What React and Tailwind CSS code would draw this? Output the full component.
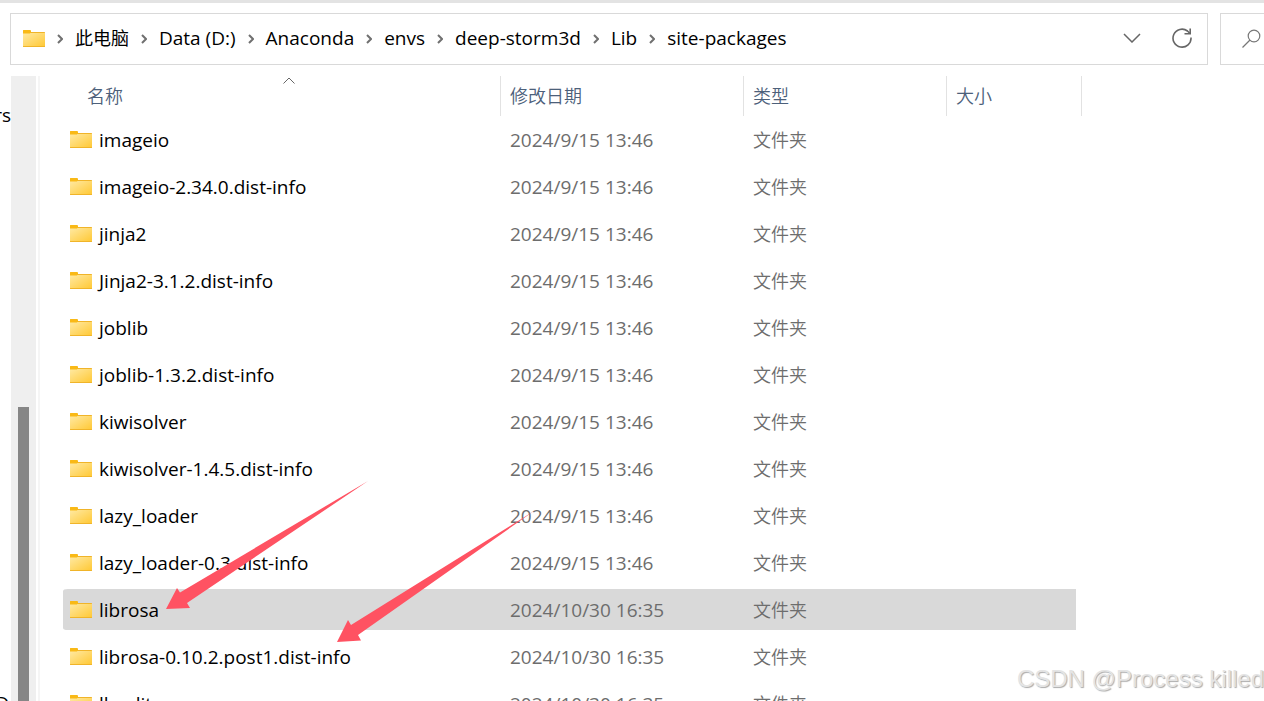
import React, { useState } from 'react';

const PATH = ['此电脑', 'Data (D:)', 'Anaconda', 'envs', 'deep-storm3d', 'Lib', 'site-packages'];

const COLUMNS = [
  { label: '名称', width: 'w-[438px]', pad: 'pl-6' },
  { label: '修改日期', width: 'w-[243px]', pad: 'pl-[9px]' },
  { label: '类型', width: 'w-[203px]', pad: 'pl-[9px]' },
  { label: '大小', width: 'w-[135px]', pad: 'pl-[9px]' },
];

const FOLDERS = [
  { name: 'imageio', date: '2024/9/15 13:46' },
  { name: 'imageio-2.34.0.dist-info', date: '2024/9/15 13:46' },
  { name: 'jinja2', date: '2024/9/15 13:46' },
  { name: 'Jinja2-3.1.2.dist-info', date: '2024/9/15 13:46' },
  { name: 'joblib', date: '2024/9/15 13:46' },
  { name: 'joblib-1.3.2.dist-info', date: '2024/9/15 13:46' },
  { name: 'kiwisolver', date: '2024/9/15 13:46' },
  { name: 'kiwisolver-1.4.5.dist-info', date: '2024/9/15 13:46' },
  { name: 'lazy_loader', date: '2024/9/15 13:46' },
  { name: 'lazy_loader-0.3.dist-info', date: '2024/9/15 13:46' },
  { name: 'librosa', date: '2024/10/30 16:35' },
  { name: 'librosa-0.10.2.post1.dist-info', date: '2024/10/30 16:35' },
  { name: 'llvmlite', date: '2024/10/30 16:35' },
];

const FolderIcon = () => (
  <svg width="22" height="17" viewBox="0 0 22 17" className="shrink-0" aria-hidden="true">
    <defs>
      <linearGradient id="folder" x1="0" y1="0" x2="1" y2="1">
        <stop offset="0" stopColor="#ffe9a2" />
        <stop offset="1" stopColor="#ffc937" />
      </linearGradient>
    </defs>
    <path d="M0 1q0-1 1-1h6l1 1v2H0z" fill="#f9b916" />
    <rect x="0" y="2" width="22" height="15" rx="0.5" fill="#f0b429" />
    <rect x="0" y="3" width="22" height="13" fill="url(#folder)" />
    <path d="M0 1q0-1 1-1h6l1 1v1l-1 1.500H0z" fill="#f9b916" />
  </svg>
);

const Separator = () => (
  <svg width="6" height="10" viewBox="0 0 6 10" fill="none" stroke="#707070" strokeWidth="2" className="mx-3 mt-[2px] shrink-0" aria-hidden="true">
    <path d="M1 1l4 4-4 4" />
  </svg>
);

const AddressBar = () => (
  <div className="flex gap-3 pt-[10px] pl-[10px]">
    <nav className="flex h-[52px] flex-1 items-center border border-[#d9d9d9] pr-[11px] pb-[2px] pl-3" aria-label="Path">
      <FolderIcon />
      <ol className="flex items-center">
        {PATH.map((part, i) => (
          <li key={part} className="flex items-center">
            <Separator />
            <a href="#" className={`whitespace-nowrap text-black ${i === 0 ? 'text-lg' : 'text-[19px] leading-7'}`}>{part}</a>
          </li>
        ))}
      </ol>
      <button type="button" className="ml-auto p-1" aria-label="Recent locations">
        <svg width="18" height="10" viewBox="0 0 18 10" fill="none" stroke="#666" strokeWidth="1.5">
          <path d="M1 1l8 8 8-8" />
        </svg>
      </button>
      <button type="button" className="ml-[23px] p-1" aria-label="Refresh">
        <svg width="20" height="20" viewBox="0 0 20 20" fill="none" stroke="#666" strokeWidth="1.6">
          <path d="M19 9.500A9 9 0 1 1 15.500 3L18 5.500" />
          <path d="M18.200 0.500v5.300h-5.700" />
        </svg>
      </button>
    </nav>
    <label className="flex h-[52px] w-11 items-center border border-r-0 border-[#d9d9d9] pb-[2px] pl-[21px]">
      <svg width="19" height="19" viewBox="0 0 19 19" fill="none" stroke="#777" strokeWidth="1.2" className="shrink-0" aria-hidden="true">
        <circle cx="12" cy="7" r="5.800" />
        <path d="M8 11L0.500 18.500" />
      </svg>
      <input type="search" aria-label="Search" className="w-0 min-w-0 outline-none" />
    </label>
  </div>
);

const NavPane = () => (
  <aside className="flex shrink-0">
    <div className="flex w-[11px] flex-col items-end justify-between overflow-hidden text-[19px] leading-6 text-black">
      <span className="pt-[27px]">rs</span>
      <span className="-mb-[14px] pr-[2px]">D</span>
    </div>
    <div className="flex w-[25px] justify-center bg-[#efefef] pt-[331px]">
      <div className="w-[11px] bg-[#868686]" />
    </div>
    <div className="ml-[2px] w-[2px] bg-[#f5f5f5]" />
  </aside>
);

const FileTable = () => {
  const [selected, setSelected] = useState('librosa');

  const cellColor = (name) => (name === selected ? 'bg-[#d9d9d9]' : 'bg-white');

  return (
    <table className="ml-[23px] table-fixed border-separate border-spacing-0 self-start text-[19px] leading-7">
      <thead>
        <tr className="h-10">
          {COLUMNS.map(({ label, width, pad }, i) => (
            <th key={label} className={`relative border-r border-[#e2e2e2] p-0 text-left text-lg leading-6 font-[350] text-[#4c607a] ${width} ${pad}`}>
              {label}
              {i === 0 && (
                <svg width="12" height="7" viewBox="0 0 12 7" fill="none" stroke="#666" className="absolute top-[1px] left-[220px]" aria-hidden="true">
                  <path d="M0.500 6.500L6 1l5.500 5.500" />
                </svg>
              )}
            </th>
          ))}
        </tr>
      </thead>
      <tbody>
        {FOLDERS.map(({ name, date }) => (
          <tr key={name} className="h-[47px] whitespace-nowrap text-[#6d6d6d]" onClick={() => setSelected(name)}>
            <td className={`rounded-l-[5px] border-y-[3px] border-transparent bg-clip-padding p-0 pl-[7px] ${cellColor(name)}`}>
              <div className="flex items-center gap-[7px] text-black">
                <FolderIcon />
                {name}
              </div>
            </td>
            <td className={`border-y-[3px] border-transparent bg-clip-padding p-0 pl-[9px] ${cellColor(name)}`}>{date}</td>
            <td className={`border-y-[3px] border-transparent bg-clip-padding p-0 pl-[9px] text-lg font-[350] ${cellColor(name)}`}>文件夹</td>
            <td className={`rounded-r-[5px] border-y-[3px] border-r-[6px] border-transparent bg-clip-padding p-0 ${cellColor(name)}`} />
          </tr>
        ))}
      </tbody>
    </table>
  );
};

// Hand-drawn pointers laid over the list
const Arrows = () => (
  <svg width="380" height="180" viewBox="0 0 380 180" fill="#ff5262" className="pointer-events-none absolute top-[469px] left-[160px]" aria-hidden="true">
    <path d="M6 137L17 116L20 120.500L208 9L27 131L30 136z" />
    <path d="M177 170L188 148L191 153L374 39L198 163L201 168.500z" />
  </svg>
);

const App = () => (
  <div className="relative flex h-screen flex-col overflow-hidden border-t-[3px] border-[#e3e3e3] bg-white font-['Open_Sans','Noto_Sans_CJK_SC',sans-serif]">
    <AddressBar />
    <main className="mt-[11px] flex min-h-0 flex-1 overflow-hidden">
      <NavPane />
      <FileTable />
    </main>
    <Arrows />
    <div className="pointer-events-none absolute right-0 bottom-[6px] font-['Liberation_Sans',sans-serif] text-2xl text-[#e4e4e4] [text-shadow:1px_1px_1px_#aaa]">
      CSDN @Process killed
    </div>
  </div>
);

export default App;
